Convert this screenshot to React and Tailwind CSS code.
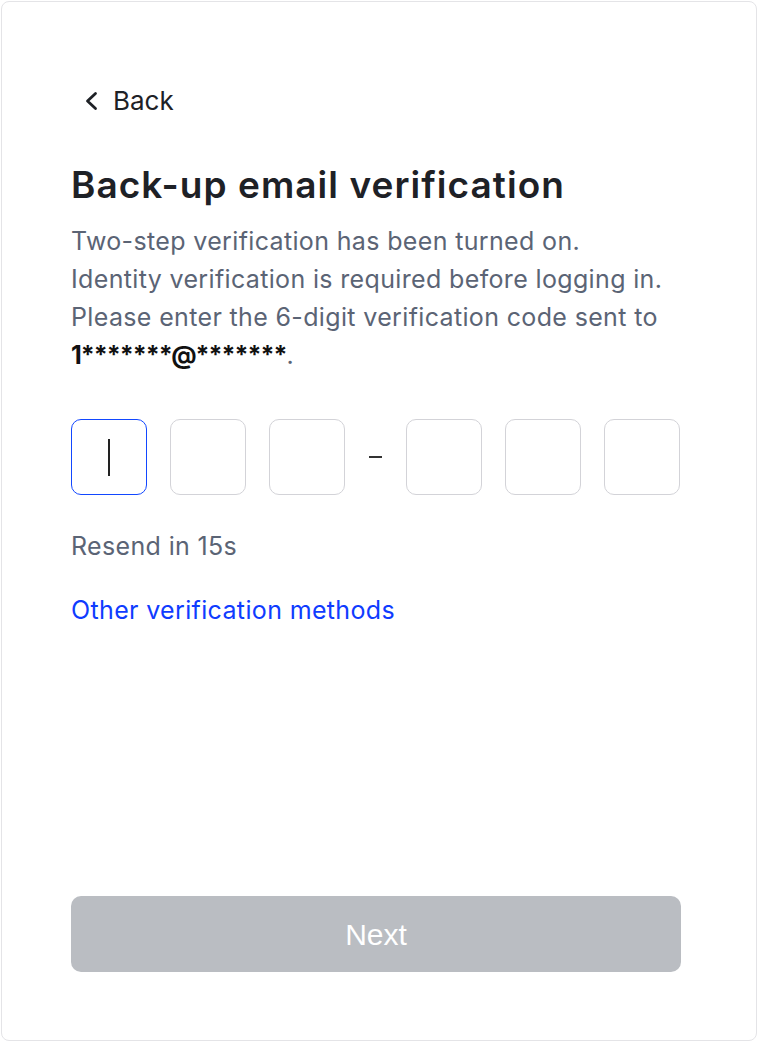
const CodeBox = ({ active }) => (
  <div
    className={`flex h-[76px] w-[76px] items-center justify-center rounded-[10px] bg-white ${
      active ? 'border-[1.8px] border-[#1247ff]' : 'border-[1.5px] border-[#d3d3d8]'
    }`}
  >
    {active && <div className="h-[37px] w-[2px] bg-[#222]" />}
  </div>
);

const App = () => {
  return (
    <div className="h-[1042px] w-[758px] bg-white p-px" style={{ fontFamily: 'Inter, "Noto Sans", sans-serif' }}>
      <div className="flex h-[1040px] w-[756px] flex-col rounded-[8px] border border-[#e4e4e7] pl-[69px] pr-[75px] pt-[80px]">
        {/* Back link */}
        <button className="flex items-center gap-[14px] self-start text-[26px] leading-[38px] text-[#1e2126]">
          <svg className="ml-[13px]" width="15" height="20" viewBox="0 0 15 20" fill="none">
            <path d="M11.5 2.5 L3.5 10 L11.5 17.5" stroke="currentColor" strokeWidth="2.8" strokeLinecap="round" strokeLinejoin="round" />
          </svg>
          Back
        </button>

        <h1 className="mt-[44px] text-[37px] font-semibold leading-[42px] tracking-[1.05px] text-[#1e2126]">
          Back-up email verification
        </h1>

        <p className="mt-[16px] text-[25px] leading-[38px] tracking-[0.35px] text-[#5b6475]">
          Two-step verification has been turned on.
          <br />
          Identity verification is required before logging in.
          <br />
          Please enter the 6-digit verification code sent to
          <br />
          <span className="font-bold tracking-[-1px] text-[#111]">1*******@*******</span>.
        </p>

        {/* Code inputs */}
        <div className="mt-[45px] flex items-center gap-[23px]">
          <CodeBox active />
          <CodeBox />
          <CodeBox />
          <div className="mx-px h-[2px] w-[13px] bg-[#333]" />
          <CodeBox />
          <CodeBox />
          <CodeBox />
        </div>

        <p className="mt-[32px] text-[25px] leading-[38px] tracking-[0.35px] text-[#5b6475]">Resend in 15s</p>

        <a href="#" className="mt-[26px] self-start text-[25px] leading-[38px] tracking-[0.35px] text-[#0f3cff]">
          Other verification methods
        </a>

        <button
          disabled
          className="mt-auto mb-[68px] h-[76px] w-full rounded-[10px] bg-[#babdc2] text-[30px] text-white"
          style={{ fontFamily: '"Liberation Sans", Arial, sans-serif' }}
        >
          Next
        </button>
      </div>
    </div>
  );
};

export default App;
